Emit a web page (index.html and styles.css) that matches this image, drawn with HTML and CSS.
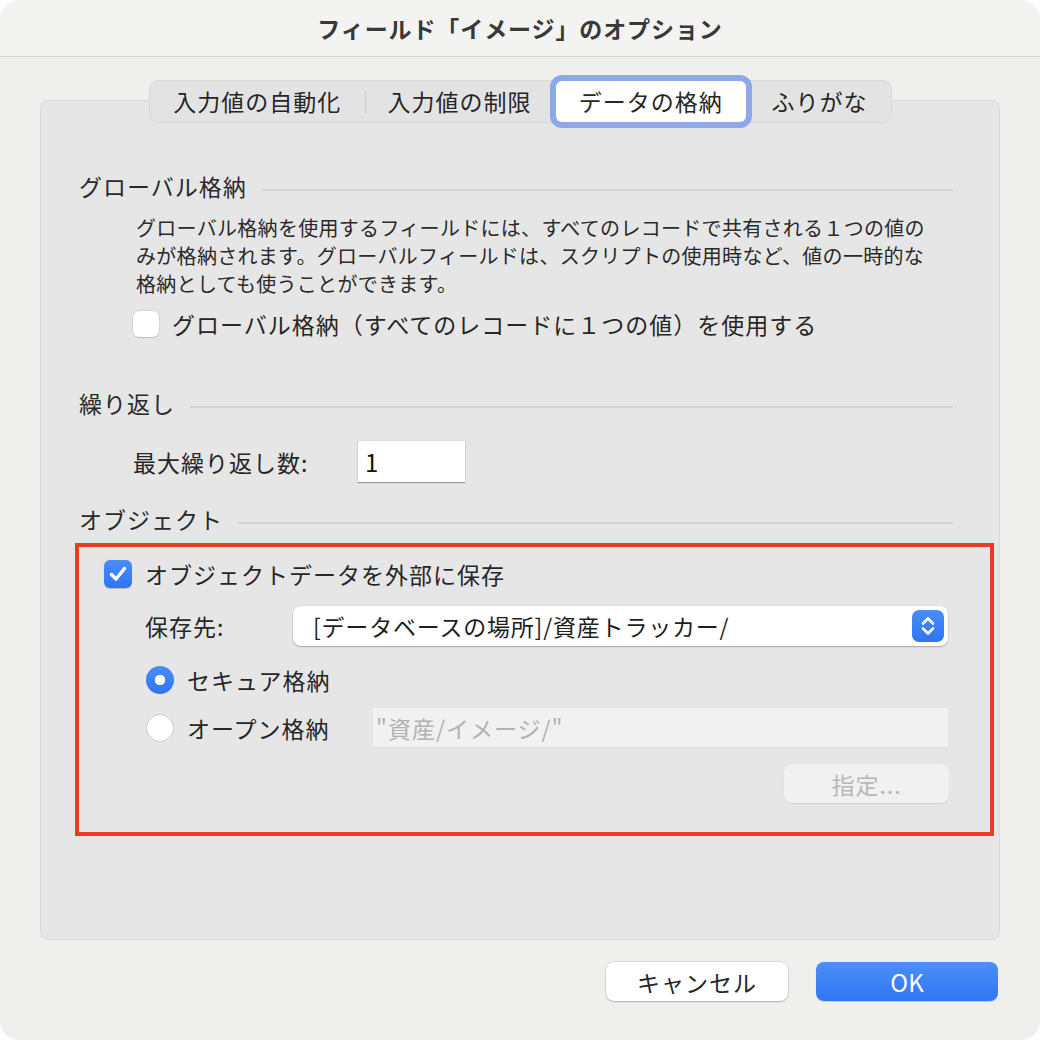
FILE: index.html
```html
<!DOCTYPE html>
<html lang="ja">
<head>
<meta charset="utf-8">
<title>フィールド「イメージ」のオプション</title>
<link rel="stylesheet" href="styles.css">
</head>
<body>
<div class="window">
  <header class="titlebar">フィールド「イメージ」のオプション</header>
  <main class="content">
    <nav class="tabs">
      <span class="tab tab-1">入力値の自動化</span>
      <span class="sep"></span>
      <span class="tab tab-2">入力値の制限</span>
      <span class="tab tab-3 selected">データの格納</span>
      <span class="tab tab-4">ふりがな</span>
    </nav>
    <section class="panel">
      <div class="group-title"><span>グローバル格納</span><i class="rule"></i></div>
      <p class="desc">グローバル格納を使用するフィールドには、すべてのレコードで共有される１つの値の<br>みが格納されます。グローバルフィールドは、スクリプトの使用時など、値の一時的な<br>格納としても使うことができます。</p>
      <div class="check-row global">
        <span class="checkbox"></span>
        <span class="label">グローバル格納（すべてのレコードに１つの値）を使用する</span>
      </div>

      <div class="group-title repeat"><span>繰り返し</span><i class="rule"></i></div>
      <div class="repeat-row">
        <span class="repeat-label">最大繰り返し数:</span>
        <span class="num-field">1</span>
      </div>

      <div class="group-title object"><span>オブジェクト</span><i class="rule"></i></div>
      <div class="highlight">
        <div class="check-row ext">
          <span class="checkbox checked">
            <svg width="28" height="28" viewBox="0 0 28 28"><polyline points="7.5,14.5 12,19 20.5,8.5" fill="none" stroke="#fff" stroke-width="3.4" stroke-linecap="round" stroke-linejoin="round"/></svg>
          </span>
          <span class="label">オブジェクトデータを外部に保存</span>
        </div>
        <div class="dest-row">
          <span class="dest-label">保存先:</span>
          <div class="popup">
            <span class="popup-text">[データベースの場所]/資産トラッカー/</span>
            <span class="stepper">
              <svg width="32" height="32" viewBox="0 0 32 32"><polyline points="11,13.5 16,8.5 21,13.5" fill="none" stroke="#fff" stroke-width="2.6" stroke-linecap="round" stroke-linejoin="round"/><polyline points="11,18.5 16,23.5 21,18.5" fill="none" stroke="#fff" stroke-width="2.6" stroke-linecap="round" stroke-linejoin="round"/></svg>
            </span>
          </div>
        </div>
        <div class="radio-row secure">
          <span class="radio on"></span>
          <span class="label">セキュア格納</span>
        </div>
        <div class="radio-row open">
          <span class="radio"></span>
          <span class="label open-label">オープン格納</span>
          <span class="path-field">"資産/イメージ/"</span>
        </div>
        <div class="specify-row">
          <span class="specify">指定...</span>
        </div>
      </div>
    </section>
    <footer class="buttons">
      <span class="btn cancel">キャンセル</span>
      <span class="btn ok">OK</span>
    </footer>
  </main>
</div>
</body>
</html>
```

FILE: styles.css
```css
html, body {
  margin: 0;
  padding: 0;
  background: #ffffff;
}
body {
  font-family: "Noto Sans CJK JP", "Noto Sans", sans-serif;
  color: #262626;
  letter-spacing: 1px;
}
.window {
  width: 1040px;
  height: 1040px;
  background: #efefee;
  border-radius: 20px;
  overflow: hidden;
  display: flex;
  flex-direction: column;
}
.titlebar {
  height: 56px;
  flex: none;
  border-bottom: 1px solid #d5d5d4;
  background: #f3f3f2;
  display: flex;
  align-items: center;
  justify-content: center;
  font-weight: 700;
  font-size: 23px;
  letter-spacing: 0.9px;
  color: #383838;
}
.content {
  padding: 23px 40px 0;
  display: flex;
  flex-direction: column;
}
.tabs {
  align-self: center;
  position: relative;
  z-index: 1;
  box-sizing: border-box;
  height: 43px;
  width: 743px;
  background: #e3e3e3;
  border: 1px solid #d9d9d9;
  border-radius: 9px;
  display: flex;
  align-items: center;
  font-size: 23px;
  color: #262626;
}
.tab {
  display: flex;
  align-items: center;
  justify-content: center;
  height: 41px;
  line-height: 1;
}
.tab-1 { width: 216px; }
.tab-2 { width: 187px; }
.tab-4 { width: 142px; }
.sep {
  width: 1px;
  height: 22px;
  background: #c9c9c9;
}
.tab-3.selected {
  box-sizing: border-box;
  width: 190px;
  height: 41px;
  margin: 0 3px;
  background: #ffffff;
  border-radius: 6px;
  box-shadow: 0 0 0 6px #8da8eb, 0 1px 1px rgba(0,0,0,0.2);
}
.panel {
  box-sizing: border-box;
  margin-top: -23px;
  height: 840px;
  background: #e6e6e6;
  border: 1px solid #dadada;
  border-radius: 8px;
  padding: 70px 46px 0 38px;
  display: flex;
  flex-direction: column;
}
.group-title {
  display: flex;
  align-items: center;
  gap: 15px;
  font-size: 23px;
  line-height: 30px;
  color: #2a2a2a;
}
.group-title .rule {
  flex: 1;
  height: 2px;
  margin-top: 8px;
  background: #d3d3d3;
}
.desc {
  margin: 13px 0 0 57px;
  font-size: 20px;
  letter-spacing: 0.3px;
  line-height: 28px;
  white-space: nowrap;
  color: #2a2a2a;
}
.check-row {
  display: flex;
  align-items: center;
  gap: 13px;
  font-size: 23px;
  line-height: 30px;
}
.check-row.global {
  margin: 11px 0 0 54px;
}
.checkbox {
  box-sizing: border-box;
  width: 26px;
  height: 26px;
  background: #ffffff;
  border-radius: 6px;
  box-shadow: 0 0 0 0.5px rgba(0,0,0,0.15), 0 1px 1px rgba(0,0,0,0.1);
  display: flex;
}
.checkbox.checked {
  width: 28px;
  height: 28px;
  background: linear-gradient(#4a8ef8, #2f75f4);
  box-shadow: 0 0.5px 1px rgba(0,0,0,0.2);
}
.group-title.repeat {
  margin-top: 49px;
}
.repeat-row {
  margin: 23px 0 0 54px;
  display: flex;
  align-items: center;
  height: 41px;
  font-size: 23px;
}
.repeat-label {
  width: 225px;
}
.num-field {
  box-sizing: border-box;
  width: 107px;
  height: 41px;
  background: #ffffff;
  box-shadow: 0 1px 1px rgba(0,0,0,0.3), 0 0 0 0.5px rgba(0,0,0,0.08);
  padding-left: 7px;
  line-height: 41px;
  font-size: 24px;
  color: #111;
}
.group-title.object {
  margin-top: 22px;
}
.highlight {
  margin: 9px -41px 0 -4px;
  border: 4px solid #ea3b27;
  padding: 13px 42px 29px 25px;
  display: flex;
  flex-direction: column;
}
.check-row.ext {
  height: 28px;
}
.dest-row {
  margin: 18px 0 0 41px;
  display: flex;
  align-items: center;
  font-size: 23px;
}
.dest-label {
  width: 148px;
}
.popup {
  flex: 1;
  height: 40px;
  background: #ffffff;
  border-radius: 8px;
  box-shadow: 0 1px 1.5px rgba(0,0,0,0.25), 0 0 0 0.5px rgba(0,0,0,0.06);
  display: flex;
  align-items: center;
  justify-content: space-between;
  padding: 0 4px 0 20px;
}
.popup-text {
  color: #1e1e1e;
  letter-spacing: 0.8px;
}
.stepper {
  width: 32px;
  height: 32px;
  border-radius: 7px;
  background: linear-gradient(#4a8ef8, #2f75f4);
  display: flex;
}
.radio-row {
  margin-left: 42px;
  display: flex;
  align-items: center;
  gap: 13px;
  font-size: 23px;
}
.radio-row.secure {
  margin-top: 20px;
  height: 28px;
}
.radio-row.open {
  margin-top: 14px;
  height: 40px;
}
.radio {
  box-sizing: border-box;
  width: 28px;
  height: 28px;
  border-radius: 50%;
  background: #ffffff;
  border: 1px solid #c9c9c9;
  flex: none;
}
.radio.on {
  border: none;
  background: radial-gradient(circle, #ffffff 0 5px, transparent 5.5px), linear-gradient(#4a8ef8, #2f75f4);
}
.open-label {
  width: 173px;
}
.path-field {
  box-sizing: border-box;
  flex: 1;
  height: 40px;
  background: #f1f1f1;
  border-bottom: 1px solid #dcdcdc;
  padding-left: 3px;
  line-height: 40px;
  color: #b2b2b2;
}
.specify-row {
  margin-top: 16px;
  display: flex;
  justify-content: flex-end;
}
.specify {
  width: 165px;
  height: 39px;
  margin-right: -1px;
  border-radius: 8px;
  background: #f1f1f1;
  box-shadow: 0 0.5px 1px rgba(0,0,0,0.08);
  display: flex;
  align-items: center;
  justify-content: center;
  font-size: 23px;
  color: #b7b7b7;
}
.buttons {
  margin-top: 22px;
  padding-right: 2px;
  display: flex;
  justify-content: flex-end;
  gap: 28px;
}
.btn {
  width: 182px;
  height: 39px;
  border-radius: 8px;
  display: flex;
  align-items: center;
  justify-content: center;
  font-size: 23px;
}
.btn.cancel {
  background: #ffffff;
  color: #262626;
  box-shadow: 0 0 0 0.5px rgba(0,0,0,0.15), 0 1px 1.5px rgba(0,0,0,0.2);
}
.btn.ok {
  background: linear-gradient(#4b8ff8, #2f76f4);
  color: #ffffff;
  font-size: 24px;
  letter-spacing: 0;
  box-shadow: 0 0.5px 1px rgba(0,0,0,0.15);
}
```
